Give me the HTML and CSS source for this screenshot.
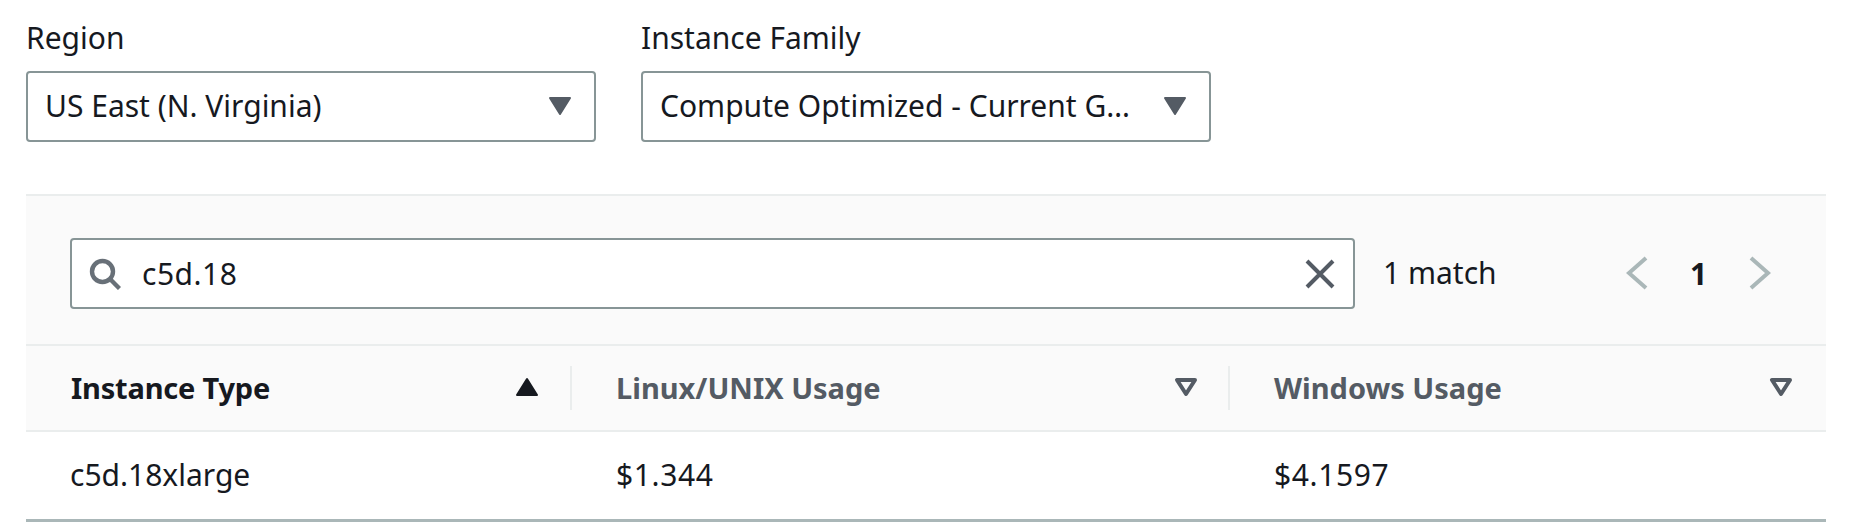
FILE: index.html
```html
<!DOCTYPE html>
<html lang="en">
<head>
<meta charset="utf-8">
<title>Instance pricing</title>
<link rel="stylesheet" href="styles.css">
</head>
<body>
<main class="page">
  <section class="filters">
    <div class="field">
      <div class="label">Region</div>
      <div class="select">
        <span class="select-text">US East (N. Virginia)</span>
        <svg class="caret" viewBox="0 0 24 20"><path d="M2 2h20L12 18z" fill="#545b64" stroke="#545b64" stroke-width="2" stroke-linejoin="round"/></svg>
      </div>
    </div>
    <div class="field">
      <div class="label">Instance Family</div>
      <div class="select">
        <span class="select-text">Compute Optimized - Current G…</span>
        <svg class="caret" viewBox="0 0 24 20"><path d="M2 2h20L12 18z" fill="#545b64" stroke="#545b64" stroke-width="2" stroke-linejoin="round"/></svg>
      </div>
    </div>
  </section>
  <section class="panel">
    <div class="toolbar">
      <div class="search">
        <svg class="search-icon" viewBox="0 0 32 32"><circle cx="13.5" cy="13.5" r="10.5" fill="none" stroke="#687078" stroke-width="4.4"/><path d="M21 21l9.5 9.5" stroke="#687078" stroke-width="4.4" fill="none"/></svg>
        <span class="search-text">c5d.18</span>
        <svg class="clear-icon" viewBox="0 0 30 30"><path d="M2 2l26 26M28 2L2 28" stroke="#545b64" stroke-width="4" fill="none"/></svg>
      </div>
      <div class="matches">1 match</div>
      <div class="pager">
        <svg class="chev" viewBox="0 0 22 34"><path d="M20 2L3 17l17 15" fill="none" stroke="#aab7b8" stroke-width="4"/></svg>
        <span class="page-num">1</span>
        <svg class="chev" viewBox="0 0 22 34"><path d="M2 2l17 15L2 32" fill="none" stroke="#aab7b8" stroke-width="4"/></svg>
      </div>
    </div>
    <div class="thead">
      <div class="th th-first">
        <span>Instance Type</span>
        <svg class="sort" viewBox="0 0 24 20"><path d="M2 18h20L12 2z" fill="#16191f" stroke="#16191f" stroke-width="2" stroke-linejoin="round"/></svg>
      </div>
      <div class="th th-div">
        <span>Linux/UNIX Usage</span>
        <svg class="sort" viewBox="0 0 24 20"><path d="M3 3h18l-9 14z" fill="none" stroke="#545b64" stroke-width="4" stroke-linejoin="round"/></svg>
      </div>
      <div class="th th-div th-last">
        <span>Windows Usage</span>
        <svg class="sort" viewBox="0 0 24 20"><path d="M3 3h18l-9 14z" fill="none" stroke="#545b64" stroke-width="4" stroke-linejoin="round"/></svg>
      </div>
    </div>
    <div class="tbody">
      <div class="td td-first">c5d.18xlarge</div>
      <div class="td">$1.344</div>
      <div class="td">$4.1597</div>
    </div>
  </section>
</main>
</body>
</html>
```
FILE: styles.css
```css
* { box-sizing: border-box; }
html, body { margin: 0; background: #fff; }
body {
  font-family: "Noto Sans", "Open Sans", sans-serif;
  font-size: 30px;
  color: #16191f;
  overflow: hidden;
}
.page { width: 1826px; padding: 0 0 0 26px; }
.filters { display: flex; gap: 45px; padding-top: 19px; height: 194px; }
.field { width: 570px; }
.label { height: 52px; line-height: 38px; }
.select {
  height: 71px;
  border: 2px solid #879596;
  border-radius: 4px;
  background: #fff;
  display: flex;
  align-items: center;
  justify-content: space-between;
  padding: 0 22px 2px 17px;
  line-height: 66px;
}
.caret { width: 24px; height: 20px; }
.panel { background: #fafafa; border-top: 2px solid #eaeded; }
.toolbar { display: flex; align-items: flex-start; height: 150px; padding: 42px 0 0 44px; border-bottom: 2px solid #eaeded; }
.search {
  width: 1285px;
  height: 71px;
  border: 2px solid #879596;
  border-radius: 4px;
  background: #fff;
  display: flex;
  align-items: center;
  padding: 0 18px 0 17px;
}
.search-icon { width: 32px; height: 32px; }
.search-text { margin-left: 21px; flex: 1; letter-spacing: 0.5px; }
.clear-icon { width: 30px; height: 30px; }
.matches { margin-left: 28px; width: 243px; line-height: 70px; }
.pager { display: flex; align-items: center; gap: 42px; height: 70px; }
.chev { width: 22px; height: 34px; }
.page-num { font-weight: 700; }
.thead { display: grid; grid-template-columns: 544px 658px 597px; height: 86px; border-bottom: 2px solid #eaeded; align-items: center; }
.th { display: flex; align-items: center; justify-content: space-between; height: 44px; font-size: 29px; font-weight: 700; color: #545b64; padding: 0 30px 2px 44px; }
.th-div { border-left: 2px solid #eaeded; }
.th-first { padding-left: 45px; padding-right: 31px; color: #16191f; letter-spacing: -0.2px; }
.th-last { padding-right: 32px; }
.sort { width: 24px; height: 20px; }
.tbody { display: grid; grid-template-columns: 544px 658px 597px; height: 90px; background: #fff; border-bottom: 3px solid #aab7b8; align-items: center; }
.td { padding: 0 0 2px 46px; letter-spacing: 0.6px; }
.td-first { padding-left: 44px; letter-spacing: 0; }
```
